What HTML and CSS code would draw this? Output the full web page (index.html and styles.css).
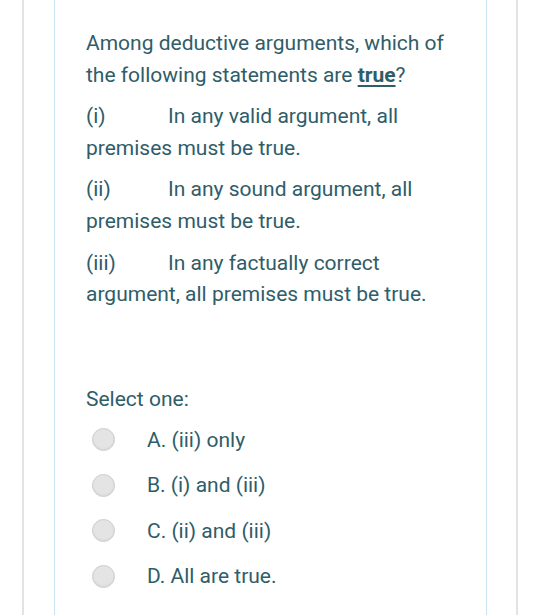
FILE: index.html
```html
<!DOCTYPE html>
<html>
<head>
<meta charset="utf-8">
<link rel="stylesheet" href="styles.css">
</head>
<body>
<div class="page">
  <div class="card">
    <div class="qtext">
      <p class="para"><span>Among deductive arguments, which of</span> <span>the following statements are <strong class="emph">true</strong>?</span></p>
      <p class="para"><span class="num">(i)</span><span>In any valid argument, all</span> <span>premises must be true.</span></p>
      <p class="para"><span class="num">(ii)</span><span>In any sound argument, all</span> <span>premises must be true.</span></p>
      <p class="para"><span class="num">(iii)</span><span>In any factually correct</span> <span>argument, all premises must be true.</span></p>
    </div>
    <div class="ablock">
      <div class="prompt">Select one:</div>
      <div class="answers">
        <label class="opt"><span class="radio"></span><span class="otext">A. (iii) only</span></label>
        <label class="opt"><span class="radio"></span><span class="otext">B. (i) and (iii)</span></label>
        <label class="opt"><span class="radio"></span><span class="otext">C. (ii) and (iii)</span></label>
        <label class="opt"><span class="radio"></span><span class="otext">D. All are true.</span></label>
      </div>
    </div>
  </div>
</div>
</body>
</html>
```
FILE: styles.css
```css
html, body {
  margin: 0;
  padding: 0;
  background: #ffffff;
}
body {
  width: 540px;
  height: 615px;
  overflow: hidden;
  font-family: Roboto, "Liberation Sans", Arial, sans-serif;
  color: #2f5d69;
}
.page {
  margin: 0 22px;
  height: 615px;
  border-left: 2px solid #e3e3e3;
  border-right: 2px solid #e3e3e3;
  padding: 0 29px 0 30px;
}
.card {
  height: 615px;
  border-left: 1.5px solid #c9e2f2;
  border-right: 1.5px solid #c9e2f2;
  padding: 28px 22px 0 31px;
  box-sizing: border-box;
}
.qtext {
  font-size: 21px;
  line-height: 31.6px;
}
.para {
  margin: 0 0 10px 0;
}
.emph {
  font-weight: 700;
  text-decoration: underline;
  text-underline-offset: 3px;
}
.num {
  display: inline-block;
  width: 82px;
}
.ablock {
  margin-top: 72px;
}
.prompt {
  font-size: 21px;
  line-height: 32px;
}
.answers {
  display: flex;
  flex-direction: column;
  margin-top: 2px;
}
.opt {
  display: flex;
  align-items: center;
  height: 45.6px;
  font-size: 21px;
}
.radio {
  width: 23px;
  height: 23px;
  border-radius: 50%;
  background: #e4e4e4;
  border: 1px solid #cdcdcd;
  box-sizing: border-box;
  margin-left: 6px;
  margin-right: 32px;
  box-shadow: inset 0 -1px 2px rgba(0,0,0,0.06);
}
.otext {
  display: block;
}
```
